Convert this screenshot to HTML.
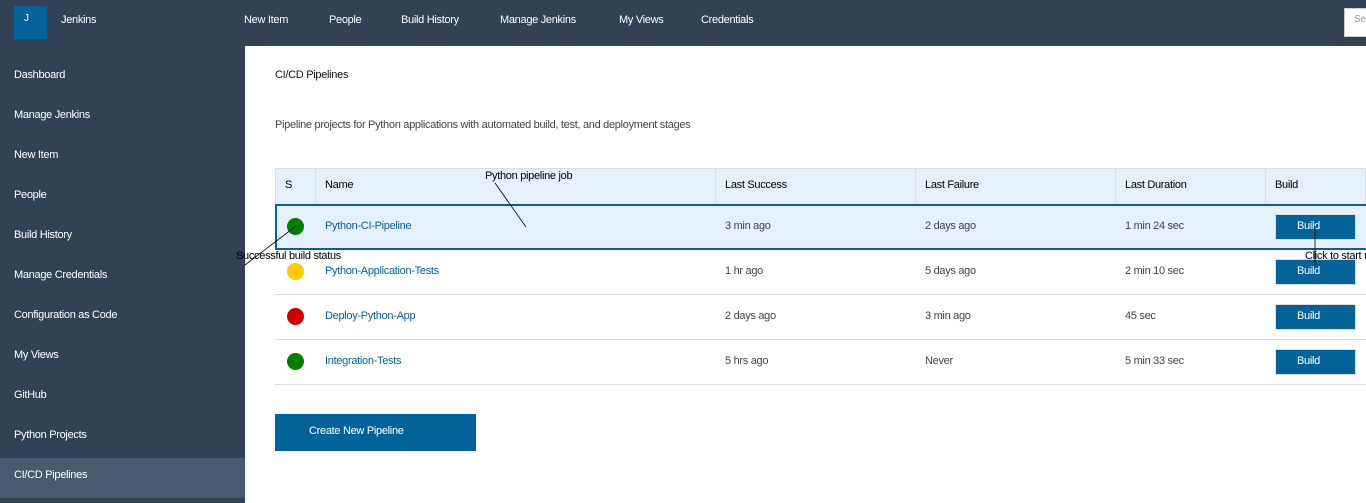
<!DOCTYPE html>
<html><head><style>
*{margin:0;padding:0;box-sizing:border-box}
body{width:1366px;height:503px;overflow:hidden;background:#fff;font-family:"Liberation Sans",sans-serif;font-size:11px;position:relative;letter-spacing:-0.3px}
.a{position:absolute;white-space:nowrap}
.t{position:absolute;white-space:nowrap;margin-top:1px}
#hdr{position:absolute;left:0;top:0;width:1366px;height:46px;background:#334155}
#side{position:absolute;left:0;top:46px;width:245px;height:457px;background:#334155}
.w{color:#fff}
.hl{position:absolute;background:#ddd}
.btn{position:absolute;left:1275px;width:81px;height:26px;background:#036399;border:1px solid #ddd;color:#fff;text-align:center;line-height:22px;padding-right:14px}
.dot{position:absolute;left:287px;width:17px;height:17px;border-radius:50%}
.lnk{color:#036399}
.g{color:#444}
</style></head><body>
<div id="hdr"></div>
<div class="a" style="left:14px;top:6px;width:33px;height:33px;background:#036399"></div>
<div class="t w" style="left:24px;top:12px;font-size:10px">J</div>
<div class="t w" style="left:61px;top:13px">Jenkins</div>
<div class="t w" style="left:244px;top:13px">New Item</div>
<div class="t w" style="left:329px;top:13px">People</div>
<div class="t w" style="left:401px;top:13px">Build History</div>
<div class="t w" style="left:500px;top:13px">Manage Jenkins</div>
<div class="t w" style="left:619px;top:13px">My Views</div>
<div class="t w" style="left:701px;top:13px">Credentials</div>
<div class="a" style="left:1344px;top:8px;width:30px;height:29px;background:#fff;border:1px solid #ccc;color:#999;font-size:10px;padding:5px 0 0 9px">Se</div>
<div id="side"></div>
<div class="a" style="left:0;top:458px;width:245px;height:40px;background:#475a6e"></div>
<div class="t w" style="left:14px;top:68px">Dashboard</div>
<div class="t w" style="left:14px;top:108px">Manage Jenkins</div>
<div class="t w" style="left:14px;top:148px">New Item</div>
<div class="t w" style="left:14px;top:188px">People</div>
<div class="t w" style="left:14px;top:228px">Build History</div>
<div class="t w" style="left:14px;top:268px">Manage Credentials</div>
<div class="t w" style="left:14px;top:308px">Configuration as Code</div>
<div class="t w" style="left:14px;top:348px">My Views</div>
<div class="t w" style="left:14px;top:388px">GitHub</div>
<div class="t w" style="left:14px;top:428px">Python Projects</div>
<div class="t w" style="left:14px;top:468px">CI/CD Pipelines</div>

<div class="t" style="left:275px;top:68px;color:#111">CI/CD Pipelines</div>
<div class="t g" style="left:275px;top:118px">Pipeline projects for Python applications with automated build, test, and deployment stages</div>

<div class="a" style="left:275px;top:168px;width:1091px;height:37px;background:#e6f0fa;border:1px solid #ddd"></div>
<div class="hl" style="left:315px;top:168px;width:1px;height:37px"></div>
<div class="hl" style="left:715px;top:168px;width:1px;height:37px"></div>
<div class="hl" style="left:915px;top:168px;width:1px;height:37px"></div>
<div class="hl" style="left:1115px;top:168px;width:1px;height:37px"></div>
<div class="hl" style="left:1265px;top:168px;width:1px;height:37px"></div>
<div class="t" style="left:285px;top:178px">S</div>
<div class="t" style="left:325px;top:178px">Name</div>
<div class="t" style="left:725px;top:178px">Last Success</div>
<div class="t" style="left:925px;top:178px">Last Failure</div>
<div class="t" style="left:1125px;top:178px">Last Duration</div>
<div class="t" style="left:1275px;top:178px">Build</div>

<div class="a" style="left:275px;top:204px;width:1093px;height:46px;background:#e6f0fa;border:2px solid #036399"></div>
<div class="hl" style="left:275px;top:294px;width:1091px;height:1px"></div>
<div class="hl" style="left:275px;top:339px;width:1091px;height:1px"></div>
<div class="hl" style="left:275px;top:384px;width:1091px;height:1px"></div>

<div class="dot" style="top:218px;background:#008000"></div>
<div class="dot" style="top:263px;background:#fc0"></div>
<div class="dot" style="top:308px;background:#c00"></div>
<div class="dot" style="top:353px;background:#008000"></div>

<div class="t lnk" style="left:325px;top:219px">Python-CI-Pipeline</div>
<div class="t lnk" style="left:325px;top:264px">Python-Application-Tests</div>
<div class="t lnk" style="left:325px;top:309px">Deploy-Python-App</div>
<div class="t lnk" style="left:325px;top:354px">Integration-Tests</div>

<div class="t g" style="left:725px;top:219px">3 min ago</div>
<div class="t g" style="left:725px;top:264px">1 hr ago</div>
<div class="t g" style="left:725px;top:309px">2 days ago</div>
<div class="t g" style="left:725px;top:354px">5 hrs ago</div>
<div class="t g" style="left:925px;top:219px">2 days ago</div>
<div class="t g" style="left:925px;top:264px">5 days ago</div>
<div class="t g" style="left:925px;top:309px">3 min ago</div>
<div class="t g" style="left:925px;top:354px">Never</div>
<div class="t g" style="left:1125px;top:219px">1 min 24 sec</div>
<div class="t g" style="left:1125px;top:264px">2 min 10 sec</div>
<div class="t g" style="left:1125px;top:309px">45 sec</div>
<div class="t g" style="left:1125px;top:354px">5 min 33 sec</div>

<div class="btn" style="top:214px">Build</div>
<div class="btn" style="top:259px">Build</div>
<div class="btn" style="top:304px">Build</div>
<div class="btn" style="top:349px">Build</div>

<div class="a" style="left:275px;top:414px;width:201px;height:37px;background:#036399;color:#fff;padding:11px 0 0 34px">Create New Pipeline</div>

<svg class="a" style="left:0;top:0" width="1366" height="503">
<line x1="495" y1="183" x2="526" y2="227" stroke="#000" stroke-width="0.8"/>
<line x1="296" y1="226" x2="245" y2="265" stroke="#000" stroke-width="0.8"/>
<line x1="1315" y1="226" x2="1315" y2="265" stroke="#000" stroke-width="0.8"/>
</svg>
<div class="t" style="left:485px;top:169px;color:#000">Python pipeline job</div>
<div class="t" style="left:236px;top:249px;color:#000">Successful build status</div>
<div class="t" style="left:1305px;top:249px;color:#000">Click to start r</div>
</body></html>
